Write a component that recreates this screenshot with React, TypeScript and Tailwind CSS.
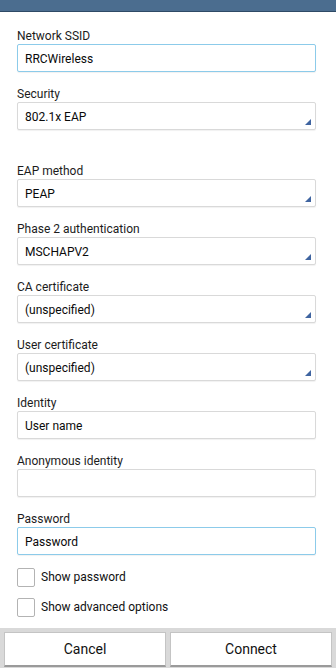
import React from "react";

const font = { fontFamily: "Roboto, 'Noto Sans', 'Liberation Sans', sans-serif" };

function Triangle() {
  return (
    <svg className="absolute right-[4px] bottom-[4px]" width="6" height="6" viewBox="0 0 6 6">
      <polygon points="6,0 6,6 0,6" fill="#3f64a0" />
    </svg>
  );
}

function Field({
  label,
  value,
  select,
  focused,
  className = "",
}: {
  label: string;
  value?: string;
  select?: boolean;
  focused?: boolean;
  className?: string;
}) {
  return (
    <div className={`flex flex-col ${className}`}>
      <div className="h-[16px] leading-[16px] text-[12px] text-[#1c1c1c]">{label}</div>
      <div
        className={`relative h-[28px] flex items-center pl-[7px] rounded-[2px] border bg-white text-[12px] text-[#0a0a0a] shadow-[0_1px_1px_rgba(0,0,0,0.06)] ${
          focused ? "border-[#8ccbea]" : "border-[#d9d9d9]"
        }`}
      >
        <span className="pt-[1px]">{value}</span>
        {select && <Triangle />}
      </div>
    </div>
  );
}

function Check({ label }: { label: string }) {
  return (
    <div className="flex items-center h-[20px] gap-[6px]">
      <div className="w-[18px] h-[19px] border border-[#b3b3b3] rounded-[2px] bg-white" />
      <span className="text-[12px] text-[#111]">{label}</span>
    </div>
  );
}

export default function App() {
  return (
    <div className="w-[336px] h-[668px] bg-white flex flex-col overflow-hidden" style={font}>
      <div className="h-[12px] bg-[#4b6d8f] border-b border-[#2e4a66]" />
      <div className="flex flex-col pl-[17px] pr-[20px] pt-[16px]">
        <Field label="Network SSID" value="RRCWireless" focused />
        <Field label="Security" value="802.1x EAP" select className="mt-[14px]" />
        <Field label="EAP method" value="PEAP" select className="mt-[33px]" />
        <Field label="Phase 2 authentication" value="MSCHAPV2" select className="mt-[14px]" />
        <Field label="CA certificate" value="(unspecified)" select className="mt-[14px]" />
        <Field label="User certificate" value="(unspecified)" select className="mt-[14px]" />
        <Field label="Identity" value="User name" className="mt-[14px]" />
        <Field label="Anonymous identity" value="" className="mt-[14px]" />
        <Field label="Password" value="Password" focused className="mt-[14px]" />
        <div className="flex flex-col gap-[10px] mt-[12px]">
          <Check label="Show password" />
          <Check label="Show advanced options" />
        </div>
      </div>
      <div className="mt-auto h-[40px] bg-[#d9d9d9] flex gap-[4px] px-[4px] pt-[4px] pb-[1px]">
        <button className="flex-1 bg-white border border-[#c4c4c4] border-b-[2px] border-b-[#9a9a9a] text-[14px] text-[#111] pt-[1px]">
          Cancel
        </button>
        <button className="flex-1 bg-white border border-[#c4c4c4] border-b-[2px] border-b-[#9a9a9a] text-[14px] text-[#111] pt-[1px]">
          Connect
        </button>
      </div>
    </div>
  );
}
